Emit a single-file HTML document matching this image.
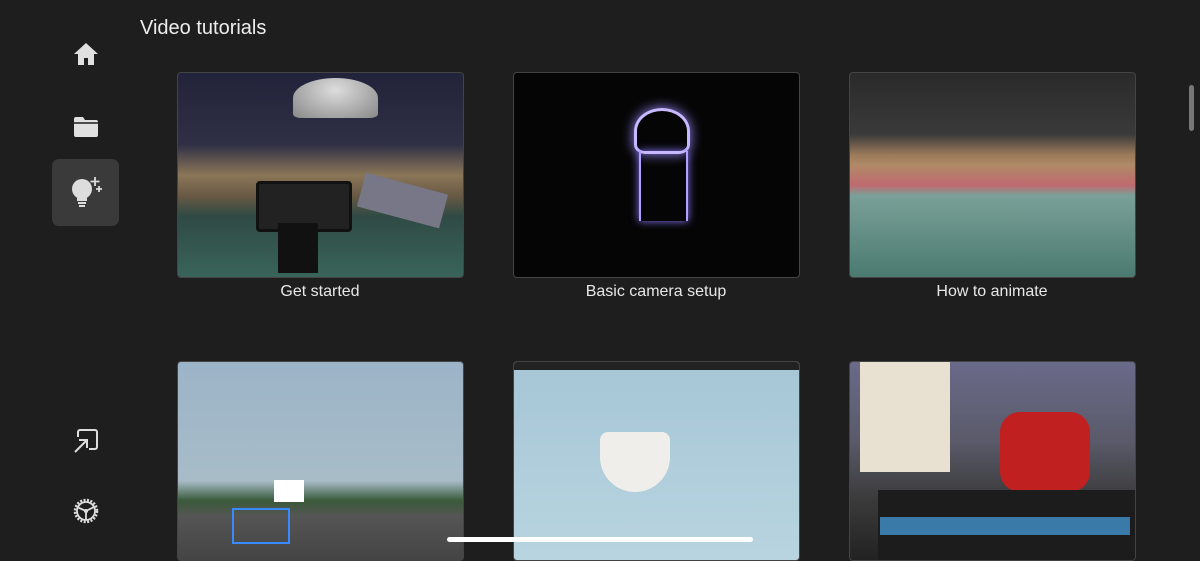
<!DOCTYPE html>
<html><head><style>
body{margin:0;width:1200px;height:554px;background:#1e1e1e;overflow:hidden;position:relative;font-family:"Liberation Sans",sans-serif;color:#eee}
.t{position:absolute;border:1px solid #444;border-radius:4px;overflow:hidden;box-sizing:border-box}
.l{position:absolute;width:286px;text-align:center;font-size:16px;color:#e8e8e8;top:283px}
</style></head><body>
<div style="position:absolute;left:140px;top:17px;font-size:20px;color:#eee">Video tutorials</div>
<svg style="position:absolute;left:73px;top:42px" width="26" height="24" viewBox="0 0 26 24"><path d="M13 1L1 12h4v11h6v-7h4v7h6V12h4z" fill="#e0e0e0"/></svg>
<svg style="position:absolute;left:73px;top:116px" width="26" height="22" viewBox="0 0 26 22"><path d="M1 3a2 2 0 012-2h7l2 3h11a2 2 0 012 2v13a2 2 0 01-2 2H3a2 2 0 01-2-2z" fill="#e0e0e0"/><path d="M1 7h24" stroke="#1e1e1e" stroke-width="1.5"/></svg>
<div style="position:absolute;left:52px;top:159px;width:67px;height:67px;background:#3a3a3a;border-radius:7px"></div>
<svg style="position:absolute;left:70px;top:176px" width="34" height="34" viewBox="0 0 34 34"><circle cx="12" cy="13" r="10" fill="#ddd"/><rect x="7" y="22" width="10" height="3" fill="#ddd"/><rect x="8" y="26" width="8" height="2" fill="#ddd"/><rect x="9" y="29" width="6" height="2" fill="#ddd"/><path d="M25 1v9M20.5 5.5h9M29 10v6M26 13h6" stroke="#ddd" stroke-width="1.8"/></svg>
<svg style="position:absolute;left:73px;top:428px" width="26" height="26" viewBox="0 0 26 26"><path d="M5 9V4a2 2 0 012-2h15a2 2 0 012 2v15a2 2 0 01-2 2h-6M2 24l12-12M6 12h8v8" fill="none" stroke="#ddd" stroke-width="2"/></svg>
<svg style="position:absolute;left:72px;top:497px" width="28" height="28" viewBox="0 0 28 28"><circle cx="14" cy="14" r="11" fill="none" stroke="#ddd" stroke-width="2.5" stroke-dasharray="2 1.5"/><circle cx="14" cy="14" r="9" fill="none" stroke="#ddd" stroke-width="1.8"/><path d="M14 14L5 10M14 14l8-4M14 14v9" stroke="#ddd" stroke-width="1.8"/><circle cx="14" cy="14" r="2" fill="#ddd"/></svg>
<div style="position:absolute;left:1189px;top:85px;width:5px;height:46px;background:#777;border-radius:3px"></div>

<div class="t" style="left:177px;top:72px;width:287px;height:206px;background:linear-gradient(180deg,#22233a 0%,#2f2f45 35%,#8a7658 50%,#6a5a44 60%,#2f4a44 70%,#39645a 100%)">
<div style="position:absolute;left:115px;top:5px;width:85px;height:40px;background:radial-gradient(ellipse at 50% 30%,#ddd,#888);border-radius:50% 50% 10% 10%"></div>
<div style="position:absolute;left:78px;top:108px;width:90px;height:45px;background:#222;border:3px solid #111;border-radius:4px"></div>
<div style="position:absolute;left:100px;top:150px;width:40px;height:50px;background:#111"></div>
<div style="position:absolute;left:182px;top:110px;width:85px;height:35px;background:#778;transform:rotate(15deg)"></div></div>
<div class="t" style="left:513px;top:72px;width:287px;height:206px;background:#050505">
<div style="position:absolute;left:120px;top:35px;width:50px;height:40px;border:3px solid #c8b8ff;border-radius:50% 50% 20% 20%;box-shadow:0 0 12px #9a8aff"></div>
<div style="position:absolute;left:125px;top:78px;width:45px;height:70px;border-left:2px solid #b0a0ff;border-right:2px solid #b0a0ff;box-shadow:0 0 8px #8a7aff"></div></div>
<div class="t" style="left:849px;top:72px;width:287px;height:206px;background:linear-gradient(180deg,#2a2a2a 0%,#3a3a3a 30%,#9a7a5a 40%,#b08a66 45%,#c06a70 55%,#7aa098 60%,#4a7a70 100%)"></div>
<div class="l" style="left:177px">Get started</div>
<div class="l" style="left:513px">Basic camera setup</div>
<div class="l" style="left:849px">How to animate</div>

<div class="t" style="left:177px;top:361px;width:287px;height:200px;background:linear-gradient(180deg,#9cb4c8 0%,#a8bcc8 60%,#3a5a3a 70%,#555 78%,#444 100%)">
<div style="position:absolute;left:96px;top:118px;width:30px;height:22px;background:#fff"></div>
<div style="position:absolute;left:54px;top:146px;width:54px;height:32px;border:2px solid #3a8aff"></div></div>
<div class="t" style="left:513px;top:361px;width:287px;height:200px;background:linear-gradient(180deg,#a6c6d6,#b8d4e0)">
<div style="position:absolute;top:0;left:0;right:0;height:8px;background:#222"></div>
<div style="position:absolute;left:86px;top:70px;width:70px;height:60px;background:#f0eeea;border-radius:8px 8px 35px 35px"></div></div>
<div class="t" style="left:849px;top:361px;width:287px;height:200px;background:linear-gradient(180deg,#6a6a8a 0%,#5a5a6a 40%,#3a3a3a 70%,#222 100%)">
<div style="position:absolute;left:10px;top:0;width:90px;height:110px;background:#e8e0d0"></div>
<div style="position:absolute;left:150px;top:50px;width:90px;height:80px;background:#c02020;border-radius:20px"></div>
<div style="position:absolute;left:28px;top:128px;width:258px;height:72px;background:#1c1c1c"></div>
<div style="position:absolute;left:30px;top:155px;width:250px;height:18px;background:#3a7aa8"></div></div>
<div style="position:absolute;left:447px;top:537px;width:306px;height:5px;background:#fff;border-radius:3px"></div>
</body></html>
